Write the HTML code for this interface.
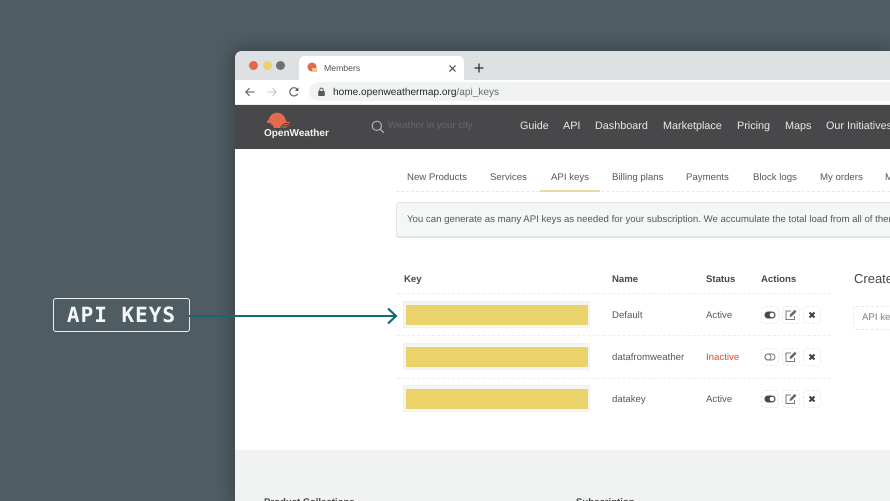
<!DOCTYPE html>
<html>
<head>
<meta charset="utf-8">
<style>
html,body{margin:0;padding:0;width:890px;height:501px;overflow:hidden}
body{position:relative;background:#4f5d63;font-family:"Liberation Sans",sans-serif;text-rendering:geometricPrecision}
.a{position:absolute;white-space:nowrap}
#clip{position:absolute;left:0;top:0;width:890px;height:501px;overflow:hidden}
#win{position:absolute;left:235px;top:51px;width:655px;height:450px;background:#fff;border-radius:7px 0 0 0;overflow:hidden}
#shadow{position:absolute;left:235px;top:51px;width:655px;height:450px;border-radius:7px 0 0 0;box-shadow:0 0 16px 3px rgba(25,32,36,.38)}
.t{position:absolute;white-space:nowrap;font-size:9.65px;color:#55585b;line-height:14px}
.nav{position:absolute;white-space:nowrap;font-size:10.8px;color:#e6e6e6;line-height:14px;top:119px}
.th{position:absolute;white-space:nowrap;font-size:9.6px;font-weight:bold;color:#48484a;line-height:14px;top:273px}
.key{position:absolute;left:403px;width:185px;height:25px;border:1px dotted #eceeee;background:#f4f5f5}
.key i{position:absolute;left:2px;top:3px;width:182px;height:20px;background:#ebd36c}
.btn{position:absolute;width:16px;height:16px;border:1px dashed #ececec;border-radius:4px;background:#fff}
.btn svg{position:absolute;left:-1px;top:-1px}
.line{position:absolute;left:397px;width:434px;border-top:1px dashed #ececec;height:0}
</style>
</head>
<body>
<div id="clip">
<div id="shadow"></div>
<div id="win">
<div class="a" style="left:0;top:0;width:655px;height:29px;background:#dee1e4"></div>
<div class="a" style="left:0;top:29px;width:655px;height:24px;background:#fff"></div>
<div class="a" style="left:0;top:53px;width:655px;height:1px;background:#eef0f0"></div>
</div>

<!-- traffic lights -->
<div class="a" style="left:249px;top:61px;width:9px;height:9px;border-radius:50%;background:#e5694f"></div>
<div class="a" style="left:263px;top:61px;width:9px;height:9px;border-radius:50%;background:#ecd268"></div>
<div class="a" style="left:276px;top:61px;width:9px;height:9px;border-radius:50%;background:#6d7275"></div>

<!-- tab -->
<div class="a" style="left:299px;top:56px;width:165px;height:25px;background:#fff;border-radius:6px 6px 0 0"></div>
<svg class="a" style="left:307px;top:62px" width="11" height="11" viewBox="0 0 11 11"><circle cx="5" cy="5" r="4.5" fill="#e5694f"/><rect x="5" y="6" width="5" height="4" fill="#ecc98a"/></svg>
<div class="a" style="left:324px;top:62px;font-size:8.7px;line-height:12px;color:#50565a">Members</div>
<svg class="a" style="left:448px;top:64px" width="9" height="9" viewBox="0 0 9 9"><path d="M1.5 1.5L7.5 7.5M7.5 1.5L1.5 7.5" stroke="#3c4043" stroke-width="1.1" fill="none"/></svg>
<svg class="a" style="left:473px;top:62px" width="12" height="12" viewBox="0 0 12 12"><path d="M6 1.5V10.5M1.5 6H10.5" stroke="#2d2f31" stroke-width="1.3" fill="none"/></svg>

<!-- toolbar -->
<svg class="a" style="left:244px;top:86px" width="12" height="12" viewBox="0 0 12 12"><path d="M10.5 6H2M5.5 2.2L1.8 6L5.5 9.8" stroke="#54595d" stroke-width="1.1" fill="none"/></svg>
<svg class="a" style="left:266px;top:86px" width="12" height="12" viewBox="0 0 12 12"><path d="M1.5 6H10M6.5 2.2L10.2 6L6.5 9.8" stroke="#c5c8ca" stroke-width="1.1" fill="none"/></svg>
<svg class="a" style="left:288px;top:86px" width="12" height="12" viewBox="0 0 12 12"><path d="M9.6 7.6A4.1 4.1 0 1 1 9.2 3.4" stroke="#54595d" stroke-width="1.1" fill="none"/><path d="M10.4 1.4V5H6.8Z" fill="#54595d"/></svg>
<div class="a" style="left:309px;top:82px;width:581px;height:19px;border-radius:10px 0 0 10px;background:#f1f3f3"></div>
<svg class="a" style="left:317px;top:87px" width="9" height="10" viewBox="0 0 9 10"><rect x="1.2" y="4" width="6.6" height="5" rx=".8" fill="#55595c"/><path d="M2.8 4V2.8A1.7 1.7 0 0 1 6.2 2.8V4" stroke="#55595c" fill="none"/></svg>
<div class="a" style="left:333px;top:85.5px;font-size:10.1px;line-height:14px;color:#222528">home.openweathermap.org<span style="color:#666c70">/api_keys</span></div>

<!-- header -->
<div class="a" style="left:235px;top:105px;width:655px;height:44px;background:#48484a"></div>
<svg class="a" style="left:266px;top:111px" width="26" height="19" viewBox="0 0 26 19"><path d="M2.5 9.5A8.7 8.7 0 0 1 19.8 9.5H20.5V11H17.5L18 13H16V15H14.5V17H8L6.5 14H5.5L4.5 12H1.2V9.5Z" fill="#e5694f"/><path d="M15.5 11.5H24M17 13.8H23M15.5 16H21" stroke="#e5694f" stroke-width="1" fill="none"/></svg>
<div class="a" style="left:264px;top:127px;font-size:10px;font-weight:bold;line-height:14px;color:#f1f1f1">OpenWeather</div>
<svg class="a" style="left:371px;top:120px" width="14" height="14" viewBox="0 0 14 14"><circle cx="5.8" cy="5.8" r="4.6" stroke="#bfc3c5" stroke-width="1" fill="none"/><path d="M9.2 9.2L12.8 12.8" stroke="#bfc3c5" stroke-width="1.1"/></svg>
<div class="a" style="left:388px;top:119px;font-size:9.6px;line-height:14px;color:#5f6a70">Weather in your city</div>
<div class="nav" style="left:520px">Guide</div>
<div class="nav" style="left:563px">API</div>
<div class="nav" style="left:595px">Dashboard</div>
<div class="nav" style="left:663px">Marketplace</div>
<div class="nav" style="left:737px">Pricing</div>
<div class="nav" style="left:785px">Maps</div>
<div class="nav" style="left:826px;width:64px;overflow:hidden">Our Initiatives</div>

<!-- tabs -->
<div class="t" style="left:407px;top:171px">New Products</div>
<div class="t" style="left:490px;top:171px">Services</div>
<div class="t" style="left:551px;top:171px">API keys</div>
<div class="t" style="left:612px;top:171px">Billing plans</div>
<div class="t" style="left:686px;top:171px">Payments</div>
<div class="t" style="left:753px;top:171px">Block logs</div>
<div class="t" style="left:820px;top:171px">My orders</div>
<div class="t" style="left:885px;top:171px;width:5px;overflow:hidden">M</div>
<div class="a" style="left:396px;top:191px;width:494px;border-top:1px dashed #e8e8e8"></div>
<div class="a" style="left:540px;top:190px;width:60px;height:2px;background:#ead9a4"></div>

<!-- notice -->
<div class="a" style="left:396px;top:202px;width:493px;height:33px;background:#f5f6f6;border:1px solid #e1e4e6;border-bottom-width:2px;border-right:0;border-radius:3px 0 0 3px"></div>
<div class="t" style="left:407px;top:213px;width:483px;overflow:hidden">You can generate as many API keys as needed for your subscription. We accumulate the total load from all of them.</div>

<!-- table -->
<div class="th" style="left:404px">Key</div>
<div class="th" style="left:612px">Name</div>
<div class="th" style="left:706px">Status</div>
<div class="th" style="left:761px">Actions</div>
<div class="a" style="left:854px;top:271px;width:36px;overflow:hidden;font-size:13px;line-height:16px;color:#48484a">Create key</div>
<div class="line" style="top:293px"></div>
<div class="line" style="top:335px"></div>
<div class="line" style="top:378px"></div>

<div class="key" style="top:301px"><i></i></div>
<div class="key" style="top:343px"><i></i></div>
<div class="key" style="top:385px"><i></i></div>

<div class="t" style="left:612px;top:309px">Default</div>
<div class="t" style="left:612px;top:351px">datafromweather</div>
<div class="t" style="left:612px;top:393px">datakey</div>
<div class="t" style="left:706px;top:309px">Active</div>
<div class="t" style="left:706px;top:351px;color:#df4a24">Inactive</div>
<div class="t" style="left:706px;top:393px">Active</div>

<!-- action buttons -->
<div class="btn" style="left:761px;top:306px"><svg width="18" height="18" viewBox="0 0 18 18"><rect x="3.5" y="5.5" width="11" height="7" rx="3.5" fill="#48484a"/><circle cx="11" cy="9" r="2.3" fill="#fff"/></svg></div>
<div class="btn" style="left:782px;top:306px"><svg width="18" height="18" viewBox="0 0 18 18"><path d="M12.5 10V13.5H4V5H9" stroke="#77797b" stroke-width="1" fill="none"/><path d="M7.5 11L8 8.5L12.7 3.8L14.5 5.6L9.8 10.4Z" fill="#66686a"/></svg></div>
<div class="btn" style="left:803px;top:306px"><svg width="18" height="18" viewBox="0 0 18 18"><path d="M6.5 6.5L11.5 11.5M11.5 6.5L6.5 11.5" stroke="#3e3e40" stroke-width="2" fill="none"/></svg></div>

<div class="btn" style="left:761px;top:348px"><svg width="18" height="18" viewBox="0 0 18 18"><rect x="4" y="6" width="10" height="6" rx="3" fill="none" stroke="#77797b" stroke-width="1"/><circle cx="7" cy="9" r="3" fill="none" stroke="#77797b" stroke-width="1"/></svg></div>
<div class="btn" style="left:782px;top:348px"><svg width="18" height="18" viewBox="0 0 18 18"><path d="M12.5 10V13.5H4V5H9" stroke="#77797b" stroke-width="1" fill="none"/><path d="M7.5 11L8 8.5L12.7 3.8L14.5 5.6L9.8 10.4Z" fill="#66686a"/></svg></div>
<div class="btn" style="left:803px;top:348px"><svg width="18" height="18" viewBox="0 0 18 18"><path d="M6.5 6.5L11.5 11.5M11.5 6.5L6.5 11.5" stroke="#3e3e40" stroke-width="2" fill="none"/></svg></div>

<div class="btn" style="left:761px;top:390px"><svg width="18" height="18" viewBox="0 0 18 18"><rect x="3.5" y="5.5" width="11" height="7" rx="3.5" fill="#48484a"/><circle cx="11" cy="9" r="2.3" fill="#fff"/></svg></div>
<div class="btn" style="left:782px;top:390px"><svg width="18" height="18" viewBox="0 0 18 18"><path d="M12.5 10V13.5H4V5H9" stroke="#77797b" stroke-width="1" fill="none"/><path d="M7.5 11L8 8.5L12.7 3.8L14.5 5.6L9.8 10.4Z" fill="#66686a"/></svg></div>
<div class="btn" style="left:803px;top:390px"><svg width="18" height="18" viewBox="0 0 18 18"><path d="M6.5 6.5L11.5 11.5M11.5 6.5L6.5 11.5" stroke="#3e3e40" stroke-width="2" fill="none"/></svg></div>

<!-- create input -->
<div class="a" style="left:853px;top:306px;width:36px;height:22px;border:1px dashed #e8e8e8;border-right:0;border-radius:3px 0 0 3px;background:#fff"></div>
<div class="t" style="left:862px;top:311px;width:28px;overflow:hidden;color:#7c8184">API key name</div>

<!-- footer -->
<div class="a" style="left:235px;top:450px;width:655px;height:51px;background:#f1f3f2;overflow:hidden">
<div class="a" style="left:29px;top:46px;font-size:9.6px;font-weight:bold;line-height:14px;color:#48484a">Product Collections</div>
<div class="a" style="left:341px;top:46px;font-size:9.6px;font-weight:bold;line-height:14px;color:#48484a">Subscription</div>
</div>

<!-- label -->
<div class="a" style="left:53px;top:298px;width:137px;height:34px;border:1.5px solid #eef1f1;border-radius:3px;box-sizing:border-box"></div>
<div class="a" style="left:53px;top:298px;width:137px;height:34px;line-height:35px;text-align:center;font-family:'DejaVu Sans Mono','Liberation Mono',monospace;font-weight:bold;font-size:21px;color:#f4f6f6;letter-spacing:1px">API KEYS</div>

<!-- arrow -->
<svg class="a" style="left:188px;top:306px" width="212" height="20" viewBox="0 0 212 20"><path d="M1 10H207" stroke="#0f6a74" stroke-width="2" fill="none"/><path d="M200 2.5L208 10L200 17.5" stroke="#0f6a74" stroke-width="2.2" fill="none"/></svg>
</div>
</body>
</html>
